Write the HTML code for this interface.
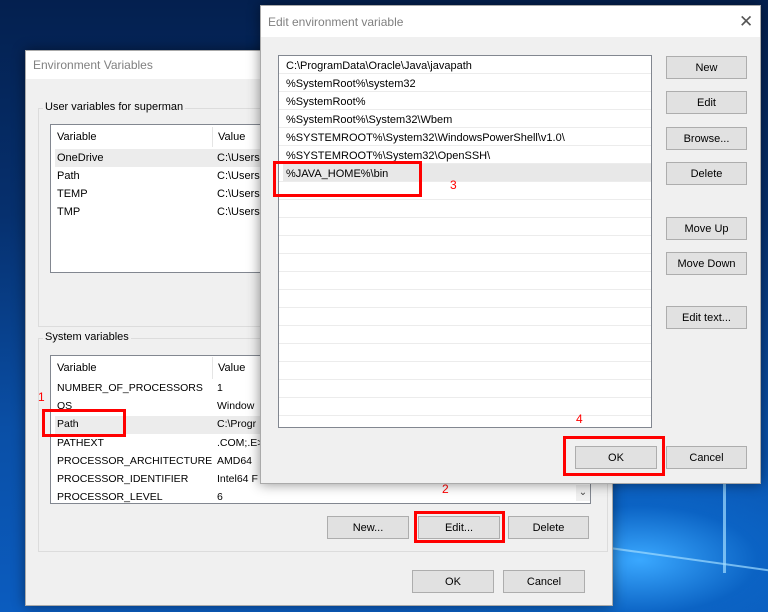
<!DOCTYPE html>
<html><head><meta charset="utf-8"><style>
*{box-sizing:border-box;margin:0;padding:0}
body{width:768px;height:612px;overflow:hidden;position:relative;font-family:"Liberation Sans",sans-serif;font-size:11px;color:#000;
background:radial-gradient(ellipse 260px 120px at 640px 560px,#3aa8ff 0%,#0b63c4 45%,rgba(0,60,140,0) 100%),linear-gradient(180deg,#04204f 0%,#06306e 35%,#0a4fa6 70%,#0b5cbf 100%)}
.a{position:absolute}
.dlg{position:absolute;background:#f0f0f0;border:1px solid #aaa;box-shadow:0 0 12px rgba(0,0,0,.45)}
.tb{position:absolute;left:0;right:0;top:0;background:#fff;color:#808080;font-size:12px}
.btn{position:absolute;background:#e1e1e1;border:1px solid #adadad;font-size:11px;display:flex;align-items:center;justify-content:center}
.list{position:absolute;background:#fff;border:1px solid #828790;overflow:hidden}
.red{position:absolute;border:3px solid #f00}
.num{position:absolute;color:#f00;font-size:12px}
.gb{position:absolute;border:1px solid #dcdcdc}
.gl{position:absolute;background:#f0f0f0;padding:0 2px;font-size:11px}
.row{position:absolute;left:0;right:0;height:18px;line-height:18px}
</style></head><body>
<div class="a" style="left:560px;top:540px;width:220px;height:2px;background:rgba(160,220,255,.7);transform:rotate(8deg);transform-origin:0 0"></div>
<div class="a" style="left:723px;top:483px;width:3px;height:90px;background:rgba(160,220,255,.7)"></div>

<div class="dlg" style="left:25px;top:50px;width:588px;height:556px">
 <div class="tb" style="height:28px;padding:7px 0 0 7px">Environment Variables</div>
 <div class="gb" style="left:12px;top:57px;width:570px;height:219px"></div>
 <div class="gl" style="left:17px;top:50px">User variables for superman</div>
 <div class="list" style="left:24px;top:73px;width:560px;height:149px">
  <div class="row" style="top:2px;height:20px;line-height:20px;padding-left:6px">Variable</div>
  <div class="row" style="top:2px;left:161px;height:20px;line-height:20px;padding-left:5px;border-left:1px solid #e5e5e5">Value</div>
  <div class="row" style="top:24px;background:#ececec;left:4px"></div>
  <div class="row" style="top:24px;padding-left:6px">OneDrive</div>
  <div class="row" style="top:42px;padding-left:6px">Path</div>
  <div class="row" style="top:60px;padding-left:6px">TEMP</div>
  <div class="row" style="top:78px;padding-left:6px">TMP</div>
  <div class="a" style="left:166px;top:24px;line-height:18px">C:\Users<br>C:\Users<br>C:\Users<br>C:\Users</div>
 </div>
 <div class="gb" style="left:12px;top:287px;width:570px;height:214px"></div>
 <div class="gl" style="left:17px;top:280px">System variables</div>
 <div class="list" style="left:24px;top:304px;width:541px;height:149px">
  <div class="row" style="top:1px;height:22px;line-height:22px;padding-left:6px">Variable</div>
  <div class="row" style="top:1px;left:161px;height:22px;line-height:22px;padding-left:5px;border-left:1px solid #e5e5e5">Value</div>
  <div class="row" style="top:60px;background:#ececec;left:4px"></div>
  <div class="a" style="left:6px;top:23px;line-height:18.2px;font-size:10.5px">NUMBER_OF_PROCESSORS<br>OS<br>Path<br>PATHEXT<br>PROCESSOR_ARCHITECTURE<br>PROCESSOR_IDENTIFIER<br>PROCESSOR_LEVEL</div>
  <div class="a" style="left:166px;top:23px;line-height:18.2px;font-size:10.5px">1<br>Window<br>C:\Progr<br>.COM;.E><br>AMD64<br>Intel64 F<br>6</div>
 </div>
 <div class="a" style="left:550px;top:434px;width:14px;height:16px;background:#f0f0f0;text-align:center;font-size:10px;line-height:16px;color:#444">⌄</div>
 <div class="btn" style="left:301px;top:465px;width:82px;height:23px">New...</div>
 <div class="btn" style="left:392px;top:465px;width:82px;height:23px">Edit...</div>
 <div class="btn" style="left:482px;top:465px;width:81px;height:23px">Delete</div>
 <div class="btn" style="left:386px;top:519px;width:82px;height:23px">OK</div>
 <div class="btn" style="left:477px;top:519px;width:82px;height:23px">Cancel</div>
</div>
<div class="red" style="left:42px;top:409px;width:84px;height:28px"></div>
<div class="num" style="left:38px;top:390px">1</div>
<div class="red" style="left:414px;top:511px;width:91px;height:32px"></div>
<div class="num" style="left:442px;top:482px">2</div>

<div class="dlg" style="left:260px;top:5px;width:501px;height:479px">
 <div class="tb" style="height:31px;padding:9px 0 0 7px">Edit environment variable</div>
 <div class="a" style="left:478px;top:6px;font-size:17px;color:#555">✕</div>
 <div class="list" style="left:17px;top:49px;width:374px;height:373px;background:repeating-linear-gradient(180deg,#fff 0,#fff 17px,#ececec 17px,#ececec 18px)">
  <div class="row" style="top:108px;background:#e8e8e8;left:4px;height:17px"></div>
  <div class="a" style="left:7px;top:1px;line-height:18px">C:\ProgramData\Oracle\Java\javapath<br>%SystemRoot%\system32<br>%SystemRoot%<br>%SystemRoot%\System32\Wbem<br>%SYSTEMROOT%\System32\WindowsPowerShell\v1.0\<br>%SYSTEMROOT%\System32\OpenSSH\<br>%JAVA_HOME%\bin</div>
 </div>
 <div class="btn" style="left:405px;top:50px;width:81px;height:23px">New</div>
 <div class="btn" style="left:405px;top:85px;width:81px;height:23px">Edit</div>
 <div class="btn" style="left:405px;top:121px;width:81px;height:23px">Browse...</div>
 <div class="btn" style="left:405px;top:156px;width:81px;height:23px">Delete</div>
 <div class="btn" style="left:405px;top:211px;width:81px;height:23px">Move Up</div>
 <div class="btn" style="left:405px;top:246px;width:81px;height:23px">Move Down</div>
 <div class="btn" style="left:405px;top:300px;width:81px;height:23px">Edit text...</div>
 <div class="btn" style="left:314px;top:440px;width:82px;height:23px">OK</div>
 <div class="btn" style="left:405px;top:440px;width:81px;height:23px">Cancel</div>
</div>
<div class="red" style="left:273px;top:161px;width:149px;height:36px"></div>
<div class="num" style="left:450px;top:178px">3</div>
<div class="red" style="left:563px;top:436px;width:102px;height:40px"></div>
<div class="num" style="left:576px;top:412px">4</div>
</body></html>
